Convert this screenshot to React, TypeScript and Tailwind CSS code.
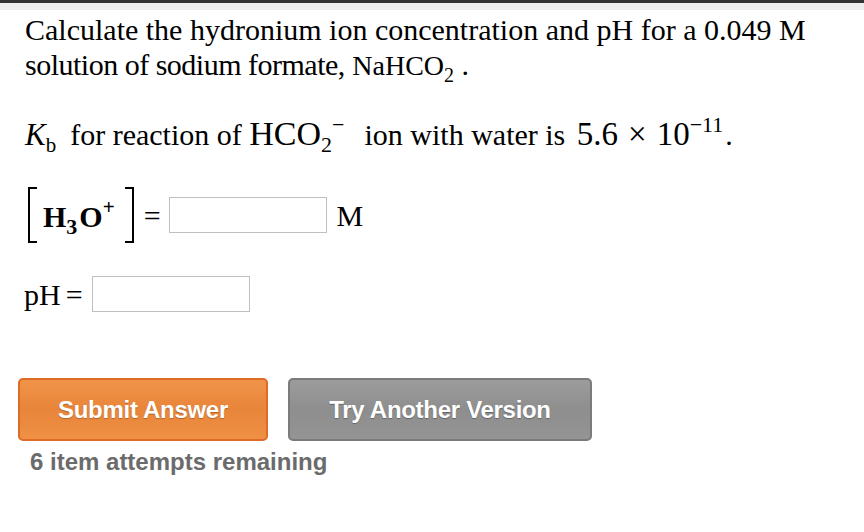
import React from 'react';

const serif = { fontFamily: '"Liberation Serif", "Times New Roman", serif' };
const sans = { fontFamily: '"Liberation Sans", Arial, Helvetica, sans-serif' };

const Sub = ({ children, size = 'text-[21px]' }: { children: React.ReactNode; size?: string }) => (
  <span className={`relative top-[7px] leading-none ${size}`}>{children}</span>
);

const Sup = ({ children, size = 'text-[21px]' }: { children: React.ReactNode; size?: string }) => (
  <span className={`relative -top-[13px] leading-none ${size}`}>{children}</span>
);

const AnswerInput = () => (
  <input
    type="text"
    className="w-[158px] h-[36px] border border-[#bfbfbf] bg-white outline-none"
  />
);

export default function App() {
  return (
    <div className="w-[864px] h-[532px] bg-white overflow-hidden" style={serif}>
      <div className="h-[3px] bg-[#333333]" />
      <div className="h-[7px] bg-[#eeeeee]" />

      <div className="pl-[25px] pt-[2px] text-black">
        {/* question text */}
        <p className="text-[30px] leading-[35px] whitespace-nowrap">
          Calculate the hydronium ion concentration and pH for a 0.049 M
          <br />
          <span className="tracking-[-0.5px]">solution of sodium formate,</span>{' '}
          <span className="text-[28px]">
            NaHCO<Sub size="text-[20px]">2</Sub>
          </span>{' '}
          .
        </p>

        <p className="mt-[33px] text-[30px] leading-[36px] whitespace-nowrap">
          <span className="text-[31px]">
            <i>K</i>
            <Sub size="text-[21px]">b</Sub>
          </span>
          <span className="ml-[14px]">for reaction of </span>
          <span className="text-[34px]">
            HCO<Sub size="text-[22px]">2</Sub>
            <Sup size="text-[22px]">−</Sup>
          </span>
          <span className="ml-[20px]">ion with water is </span>
          <span className="text-[33px] ml-[4px]">
            5.6<span className="mx-[10px]">×</span>10<Sup size="text-[22px]">−11</Sup>
          </span>
          <span className="ml-[2px]">.</span>
        </p>

        {/* [H3O+] row */}
        <div className="mt-[32px] flex items-center h-[60px]">
          <div className="flex items-center ml-[3px]">
            <div className="w-[9px] h-[56px] border-l-2 border-y-2 border-black" />
            <span className="text-[30px] font-bold pl-[6px] pr-[10px] pt-[2px]">
              H<Sub size="text-[22px]">3</Sub>
              <span className="ml-[2px]">O</span>
              <Sup size="text-[21px]">+</Sup>
            </span>
            <div className="w-[9px] h-[56px] border-r-2 border-y-2 border-black" />
          </div>
          <span className="ml-[10px] text-[30px]">=</span>
          <div className="ml-[8px]">
            <AnswerInput />
          </div>
          <span className="ml-[10px] text-[30px]">M</span>
        </div>

        {/* pH row */}
        <div className="mt-[29px] flex items-center h-[40px]">
          <span className="text-[30px] -ml-[1px]">pH</span>
          <span className="ml-[5px] text-[30px]">=</span>
          <div className="ml-[9px]">
            <AnswerInput />
          </div>
        </div>
      </div>

      {/* buttons */}
      <div className="pl-[18px] mt-[64px]" style={sans}>
        <div className="flex gap-[20px]">
          <button className="w-[250px] h-[63px] rounded-[5px] border-2 border-[#df6b28] bg-gradient-to-b from-[#f09449] via-[#e8853a] to-[#ef9144] text-white text-[24px] font-bold tracking-[-0.3px] [text-shadow:0_1px_1px_rgba(0,0,0,0.25)]">
            Submit Answer
          </button>
          <button className="w-[304px] h-[63px] rounded-[5px] border-2 border-[#7b7b7b] bg-gradient-to-b from-[#9c9c9c] via-[#8e8e8e] to-[#949494] text-white text-[24px] font-bold tracking-[-0.3px] [text-shadow:0_1px_1px_rgba(0,0,0,0.3)]">
            Try Another Version
          </button>
        </div>
        <p className="ml-[12px] mt-[6px] text-[24px] font-bold text-[#6b6b6b] leading-[30px]">
          6 item attempts remaining
        </p>
      </div>
    </div>
  );
}
